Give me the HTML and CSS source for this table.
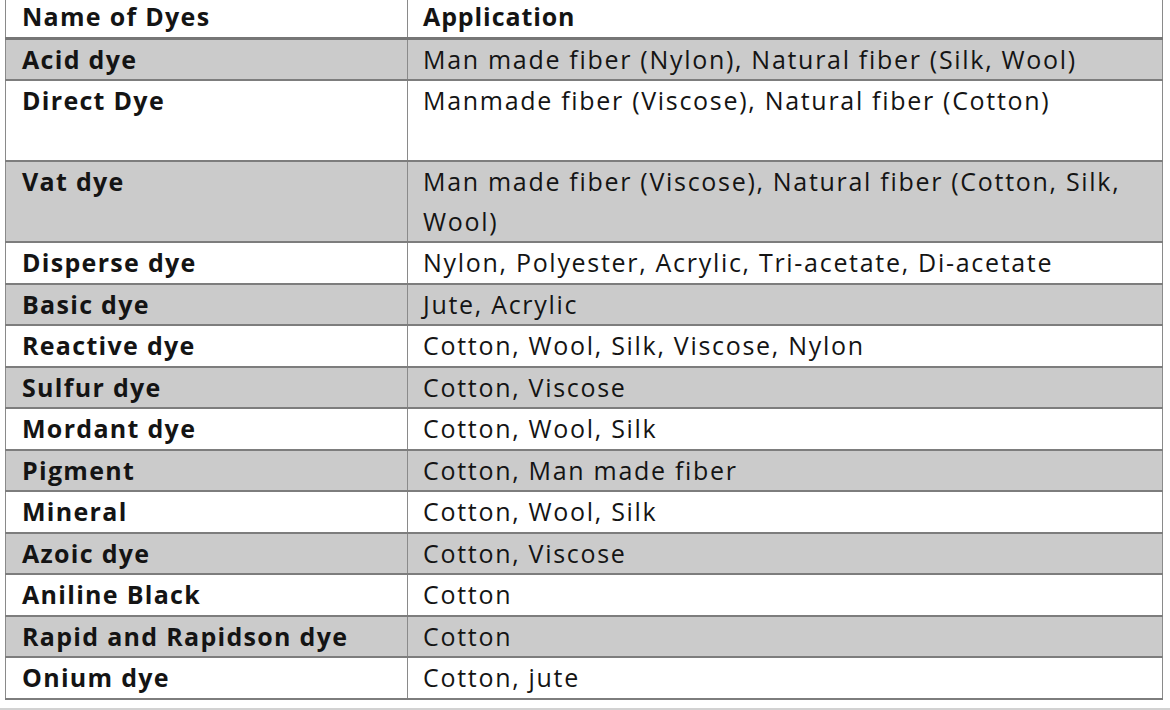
FILE: index.html
```html
<!DOCTYPE html>
<html>
<head>
<meta charset="utf-8">
<link rel="stylesheet" href="styles.css">
</head>
<body>
<table class="dyes">
  <tr class="head"><th class="name">Name of Dyes</th><th class="app">Application</th></tr>
  <tr class="shade"><td class="name">Acid dye</td><td class="app">Man made fiber (Nylon), Natural fiber (Silk, Wool)</td></tr>
  <tr><td class="name">Direct Dye</td><td class="app">Manmade fiber (Viscose), Natural fiber (Cotton)<br>&nbsp;</td></tr>
  <tr class="shade"><td class="name">Vat dye</td><td class="app">Man made fiber (Viscose), Natural fiber (Cotton, Silk,<br>Wool)</td></tr>
  <tr><td class="name">Disperse dye</td><td class="app">Nylon, Polyester, Acrylic, Tri-acetate, Di-acetate</td></tr>
  <tr class="shade"><td class="name">Basic dye</td><td class="app">Jute, Acrylic</td></tr>
  <tr><td class="name">Reactive dye</td><td class="app">Cotton, Wool, Silk, Viscose, Nylon</td></tr>
  <tr class="shade"><td class="name">Sulfur dye</td><td class="app">Cotton, Viscose</td></tr>
  <tr><td class="name">Mordant dye</td><td class="app">Cotton, Wool, Silk</td></tr>
  <tr class="shade"><td class="name">Pigment</td><td class="app">Cotton, Man made fiber</td></tr>
  <tr><td class="name">Mineral</td><td class="app">Cotton, Wool, Silk</td></tr>
  <tr class="shade"><td class="name">Azoic dye</td><td class="app">Cotton, Viscose</td></tr>
  <tr><td class="name">Aniline Black</td><td class="app">Cotton</td></tr>
  <tr class="shade"><td class="name">Rapid and Rapidson dye</td><td class="app">Cotton</td></tr>
  <tr><td class="name">Onium dye</td><td class="app">Cotton, jute</td></tr>
</table>
<div class="page-edge"></div>
</body>
</html>
```
FILE: styles.css
```css
html, body {
  margin: 0;
  padding: 0;
  background: #ffffff;
}
body {
  font-family: "Open Sans", Lato, "Liberation Sans", sans-serif;
  color: #141414;
  overflow: hidden;
}
.dyes {
  border-collapse: collapse;
  margin: -3px 0 0 5px;
  width: 1158px;
  table-layout: fixed;
  font-size: 25px;
}
.dyes th, .dyes td {
  padding: 0 0 0 16px;
  line-height: 39.5px;
  text-align: left;
  vertical-align: top;
  border-top: 2px solid #7d7d7d;
  border-bottom: 2px solid #7d7d7d;
  border-left: 1.5px solid #8a8a8a;
  border-right: 1.5px solid #8a8a8a;
  white-space: nowrap;
}
.dyes .name {
  width: 385px;
  font-weight: bold;
  letter-spacing: 1.3px;
}
.dyes .app {
  font-weight: normal;
  padding-left: 15px;
  letter-spacing: 1.7px;
}
.dyes .head th {
  font-weight: bold;
  border-top: none;
  border-bottom: 3px solid #767676;
}
.dyes .head th.app {
  letter-spacing: 0.9px;
}
.dyes .shade td {
  background: #cbcbcb;
}
.page-edge {
  margin-top: 8px;
  border-top: 2px solid #d2d2d2;
}
```
